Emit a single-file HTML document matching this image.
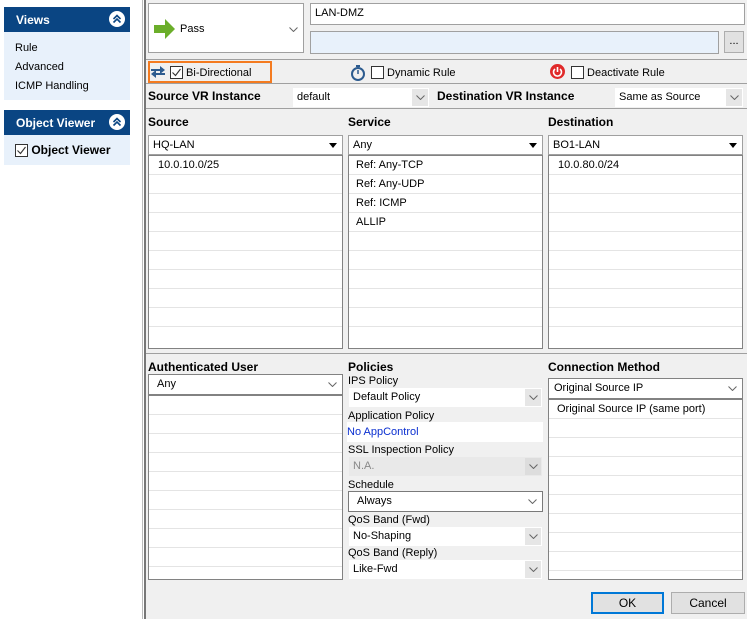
<!DOCTYPE html><html><head><style>
*{box-sizing:border-box;margin:0;padding:0}
body{width:747px;height:619px;background:#f0f0f0;font-family:"Liberation Sans",sans-serif;font-size:11px;color:#000;position:relative;overflow:hidden}
.a{position:absolute}
.side{left:0;top:0;width:142px;height:619px;background:#fff}
.hd{background:#0a4583;color:#fff;font-weight:bold;font-size:12px;padding:6px 12px}
.circ{position:absolute;right:5px;top:4px;width:16px;height:16px;border-radius:50%;background:#fff}
.body{background:#e8f1fb}
.box{background:#fff;border:1px solid #a0a0a0}
.lbl{font-weight:bold;font-size:12px}
.sep{height:1px;background:#a0a0a0;left:146px;width:601px}
.list{background:#fff;border:1px solid #828282}
.row{height:19px;border-bottom:1px solid #e4e4e4;padding:3px 0 0 9px}
.cb{display:inline-block;width:13px;height:13px;border:1px solid #333;background:#fff;vertical-align:-3px;position:relative}
.dd{position:absolute;right:5px;top:7px;width:0;height:0;border-left:4px solid transparent;border-right:4px solid transparent;border-top:5px solid #000}
.ch{position:absolute;right:5px;top:7px;width:9px;height:5px}
.sel{background:#fff;position:absolute;height:19px;padding:3px 4px}
.sel .ar{position:absolute;right:1px;top:1px;width:16px;height:17px;background:#e6e6e6}
.sel .ar svg{position:absolute;left:4px;top:6px}
</style></head><body>
<svg width="0" height="0" style="position:absolute"><defs>
<symbol id="v" viewBox="0 0 9 5"><path d="M0.5 0.5L4.5 4.5L8.5 0.5" fill="none" stroke="#666" stroke-width="1"/></symbol>
<symbol id="k" viewBox="0 0 11 11"><path d="M1.5 5.5L4.5 8.5L9.5 2" fill="none" stroke="#333" stroke-width="1.1"/></symbol>
<symbol id="dc" viewBox="0 0 16 16"><path d="M4.5 8L8 4.5L11.5 8M4.5 11.5L8 8L11.5 11.5" fill="none" stroke="#0a4583" stroke-width="1.6"/></symbol>
</defs></svg>
<div class="a side">
 <div class="a" style="left:4px;top:7px;width:126px">
  <div class="hd" style="position:relative;height:25px">Views<div class="circ"><svg width="16" height="16"><use href="#dc"/></svg></div></div>
  <div class="body" style="height:68px;padding:7px 11px;line-height:19px">Rule<br>Advanced<br>ICMP Handling</div>
 </div>
 <div class="a" style="left:4px;top:110px;width:126px">
  <div class="hd" style="position:relative;height:25px">Object Viewer<div class="circ"><svg width="16" height="16"><use href="#dc"/></svg></div></div>
  <div class="body" style="height:30px;padding:8px 11px;font-weight:bold;font-size:12px"><span class="cb"><svg class="a" style="left:0;top:0" width="11" height="11"><use href="#k"/></svg></span> Object Viewer</div>
 </div>
</div>
<div class="a" style="left:142px;top:0;width:4px;height:619px;background:#fff;border-left:1px solid #bbb;border-right:2px solid #777"></div>

<div class="a box" style="left:148px;top:3px;width:156px;height:50px">
 <svg class="a" style="left:5px;top:14px" width="22" height="22"><path d="M0 7h11V1l10 10-10 10v-6H0z" fill="#6bae2a"/></svg>
 <span class="a" style="left:31px;top:19px">Pass</span><svg class="a" style="right:5px;top:23px" width="9" height="5"><use href="#v"/></svg>
</div>
<div class="a box" style="left:310px;top:3px;width:435px;height:22px;padding:3px 4px">LAN-DMZ</div>
<div class="a" style="left:310px;top:31px;width:409px;height:23px;background:#e8f1fb;border:1px solid #a0a0a0"></div>
<div class="a" style="left:724px;top:31px;width:20px;height:22px;border:1px solid #adadad;background:#e1e1e1;text-align:center;line-height:18px">...</div>
<div class="a sep" style="top:59px"></div>
<div class="a" style="left:148px;top:61px;width:124px;height:22px;border:2px solid #f47b20"></div>
<svg class="a" style="left:150px;top:65px" width="16" height="14"><path d="M1 4h9V1l5 4-5 4V6H1zM15 10H6v3L1 9l5-4v3h9z" fill="#2c5b8f"/></svg>
<span class="a" style="left:170px;top:66px"><span class="cb"><svg class="a" style="left:0;top:0" width="11" height="11"><use href="#k"/></svg></span> Bi-Directional</span>
<svg class="a" style="left:350px;top:64px" width="16" height="17"><circle cx="8" cy="10" r="6" fill="none" stroke="#2c5b8f" stroke-width="2"/><rect x="6" y="1" width="4" height="2" fill="#2c5b8f"/><path d="M8 10V6" stroke="#2c5b8f" stroke-width="1.5"/></svg>
<span class="a" style="left:371px;top:66px"><span class="cb"></span> Dynamic Rule</span>
<svg class="a" style="left:550px;top:64px" width="15" height="15"><circle cx="7.5" cy="7.5" r="7.5" fill="#e02a2a"/><path d="M5 5a4 4 0 1 0 5 0M7.5 3v5" stroke="#fff" stroke-width="1.6" fill="none"/></svg>
<span class="a" style="left:571px;top:66px"><span class="cb"></span> Deactivate Rule</span>
<div class="a sep" style="top:83px"></div>
<span class="a lbl" style="left:148px;top:89px">Source VR Instance</span>
<div class="sel" style="left:293px;top:88px;width:136px">default<div class="ar"><svg width="9" height="5"><use href="#v"/></svg></div></div>
<span class="a lbl" style="left:437px;top:89px">Destination VR Instance</span>
<div class="sel" style="left:615px;top:88px;width:128px">Same as Source<div class="ar"><svg width="9" height="5"><use href="#v"/></svg></div></div>
<div class="a sep" style="top:108px"></div>

<span class="a lbl" style="left:148px;top:115px">Source</span>
<span class="a lbl" style="left:348px;top:115px">Service</span>
<span class="a lbl" style="left:548px;top:115px">Destination</span>
<div class="a box" style="left:148px;top:135px;width:195px;height:20px;padding:3px 4px">HQ-LAN<div class="dd"></div></div>
<div class="a box" style="left:348px;top:135px;width:195px;height:20px;padding:3px 4px">Any<div class="dd"></div></div>
<div class="a box" style="left:548px;top:135px;width:195px;height:20px;padding:3px 4px">BO1-LAN<div class="dd"></div></div>
<div class="a list" style="left:148px;top:155px;width:195px;height:194px">
<div class="row">10.0.10.0/25</div><div class="row"></div><div class="row"></div><div class="row"></div><div class="row"></div><div class="row"></div><div class="row"></div><div class="row"></div><div class="row"></div></div>
<div class="a list" style="left:348px;top:155px;width:195px;height:194px">
<div class="row" style="padding-left:7px">Ref: Any-TCP</div><div class="row" style="padding-left:7px">Ref: Any-UDP</div><div class="row" style="padding-left:7px">Ref: ICMP</div><div class="row" style="padding-left:7px">ALLIP</div><div class="row"></div><div class="row"></div><div class="row"></div><div class="row"></div><div class="row"></div></div>
<div class="a list" style="left:548px;top:155px;width:195px;height:194px">
<div class="row">10.0.80.0/24</div><div class="row"></div><div class="row"></div><div class="row"></div><div class="row"></div><div class="row"></div><div class="row"></div><div class="row"></div><div class="row"></div></div>
<div class="a sep" style="top:353px"></div>

<span class="a lbl" style="left:148px;top:360px">Authenticated User</span>
<div class="a box" style="left:148px;top:374px;width:195px;height:21px;padding:3px 8px;border-color:#828282">Any<svg class="ch" width="9" height="5"><use href="#v"/></svg></div>
<div class="a list" style="left:148px;top:395px;width:195px;height:185px">
<div class="row"></div><div class="row"></div><div class="row"></div><div class="row"></div><div class="row"></div><div class="row"></div><div class="row"></div><div class="row"></div><div class="row"></div></div>

<span class="a lbl" style="left:348px;top:360px">Policies</span>
<span class="a" style="left:348px;top:375px">IPS Policy</span>
<div class="sel" style="left:349px;top:388px;width:193px">Default Policy<div class="ar"><svg width="9" height="5"><use href="#v"/></svg></div></div>
<span class="a" style="left:348px;top:410px">Application Policy</span>
<div class="a" style="left:347px;top:422px;width:196px;height:20px;background:#fff;color:#0a2fd0;padding:4px 0">No AppControl</div>
<span class="a" style="left:348px;top:444px">SSL Inspection Policy</span>
<div class="sel" style="left:349px;top:457px;width:193px;background:#e9e9e9;color:#888">N.A.<div class="ar" style="background:#ddd"><svg width="9" height="5"><use href="#v"/></svg></div></div>
<span class="a" style="left:348px;top:479px">Schedule</span>
<div class="a box" style="left:348px;top:491px;width:195px;height:21px;padding:3px 8px;border-color:#7a7a7a">Always<svg class="ch" width="9" height="5"><use href="#v"/></svg></div>
<span class="a" style="left:348px;top:514px">QoS Band (Fwd)</span>
<div class="sel" style="left:349px;top:527px;width:193px">No-Shaping<div class="ar"><svg width="9" height="5"><use href="#v"/></svg></div></div>
<span class="a" style="left:348px;top:547px">QoS Band (Reply)</span>
<div class="sel" style="left:349px;top:560px;width:193px">Like-Fwd<div class="ar"><svg width="9" height="5"><use href="#v"/></svg></div></div>

<span class="a lbl" style="left:548px;top:360px">Connection Method</span>
<div class="a box" style="left:548px;top:378px;width:195px;height:21px;padding:3px 5px;border-color:#828282">Original Source IP<svg class="ch" width="9" height="5"><use href="#v"/></svg></div>
<div class="a list" style="left:548px;top:399px;width:195px;height:181px">
<div class="row" style="padding-left:8px">Original Source IP (same port)</div><div class="row"></div><div class="row"></div><div class="row"></div><div class="row"></div><div class="row"></div><div class="row"></div><div class="row"></div><div class="row"></div></div>

<div class="a" style="left:591px;top:592px;width:73px;height:22px;border:2px solid #0078d7;background:#e1e1e1;text-align:center;line-height:18px;font-size:12px">OK</div>
<div class="a" style="left:671px;top:592px;width:74px;height:22px;border:1px solid #adadad;background:#e1e1e1;text-align:center;line-height:20px;font-size:12px">Cancel</div>
</body></html>
